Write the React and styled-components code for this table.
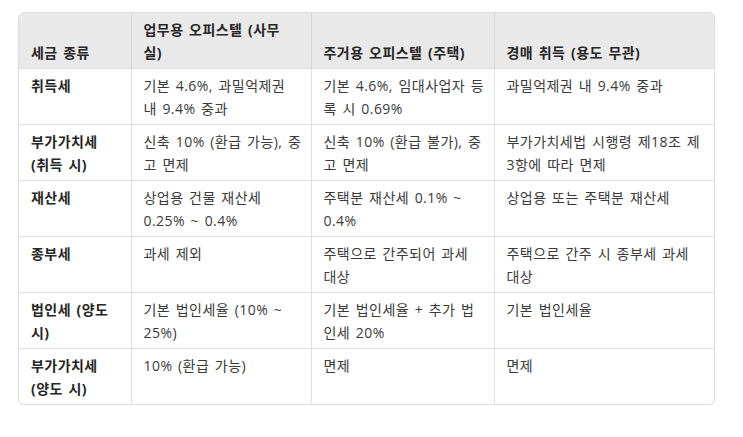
import React from 'react';
import styled, { createGlobalStyle } from 'styled-components';

const GlobalStyle = createGlobalStyle`
  html, body {
    margin: 0;
    padding: 0;
    background: #ffffff;
  }
  body {
    font-family: "Open Sans", "Noto Sans CJK KR", sans-serif;
  }
`;

const Page = styled.div`
  padding: 12px 0 0 18px;
`;

const TableWrapper = styled.div`
  width: 697px;
  box-sizing: border-box;
  border: 1px solid #dcdcdc;
  border-radius: 6px;
  overflow: hidden;
  box-shadow: 0 1px 1px rgba(0, 0, 0, 0.06);
`;

const Table = styled.table`
  width: 100%;
  border-collapse: collapse;
  table-layout: fixed;
  font-size: 14px;
  line-height: 23px;
  letter-spacing: 0.45px;
  word-spacing: 1.5px;
  color: #3a3a3a;
`;

const HeadCell = styled.th`
  height: 55px;
  padding: 4px 16px 4px 12px;
  box-sizing: border-box;
  background: #e9e9e9;
  color: #262626;
  font-weight: 700;
  text-align: left;
  vertical-align: bottom;
  border-left: 1px solid #d6d6d6;
  &:first-child {
    border-left: none;
  }
`;

const Row = styled.tr`
  border-top: 1px solid #e0e0e0;
`;

const Cell = styled.td`
  padding: 5px ${(props) => (props.$label ? '14px' : '9px')} 4px 12px;
  vertical-align: top;
  text-align: left;
  border-left: 1px solid #e0e0e0;
  font-weight: ${(props) => (props.$label ? 700 : 400)};
  color: ${(props) => (props.$label ? '#262626' : '#3a3a3a')};
  &:first-child {
    border-left: none;
  }
`;

const columns = [
  { title: '세금 종류', width: 112 },
  { title: '업무용 오피스텔 (사무실)', width: 180 },
  { title: '주거용 오피스텔 (주택)', width: 183 },
  { title: '경매 취득 (용도 무관)', width: 220 },
];

const rows = [
  ['취득세', '기본 4.6%, 과밀억제권 내 9.4% 중과', '기본 4.6%, 임대사업자 등록 시 0.69%', '과밀억제권 내 9.4% 중과'],
  ['부가가치세 (취득 시)', '신축 10% (환급 가능), 중고 면제', '신축 10% (환급 불가), 중고 면제', '부가가치세법 시행령 제18조 제3항에 따라 면제'],
  ['재산세', '상업용 건물 재산세 0.25% ~ 0.4%', '주택분 재산세 0.1% ~ 0.4%', '상업용 또는 주택분 재산세'],
  ['종부세', '과세 제외', '주택으로 간주되어 과세 대상', '주택으로 간주 시 종부세 과세 대상'],
  ['법인세 (양도 시)', '기본 법인세율 (10% ~ 25%)', '기본 법인세율 + 추가 법인세 20%', '기본 법인세율'],
  ['부가가치세 (양도 시)', '10% (환급 가능)', '면제', '면제'],
];

const App = () => {
  return (
    <Page>
      <GlobalStyle />
      <TableWrapper>
        <Table>
          <colgroup>
            {columns.map((col) => (
              <col key={col.title} style={{ width: col.width }} />
            ))}
          </colgroup>
          <thead>
            <tr>
              {columns.map((col) => (
                <HeadCell key={col.title}>{col.title}</HeadCell>
              ))}
            </tr>
          </thead>
          <tbody>
            {rows.map((row) => (
              <Row key={row[0]}>
                {row.map((text, i) => (
                  <Cell key={i} $label={i === 0}>
                    {text}
                  </Cell>
                ))}
              </Row>
            ))}
          </tbody>
        </Table>
      </TableWrapper>
    </Page>
  );
};

export default App;
